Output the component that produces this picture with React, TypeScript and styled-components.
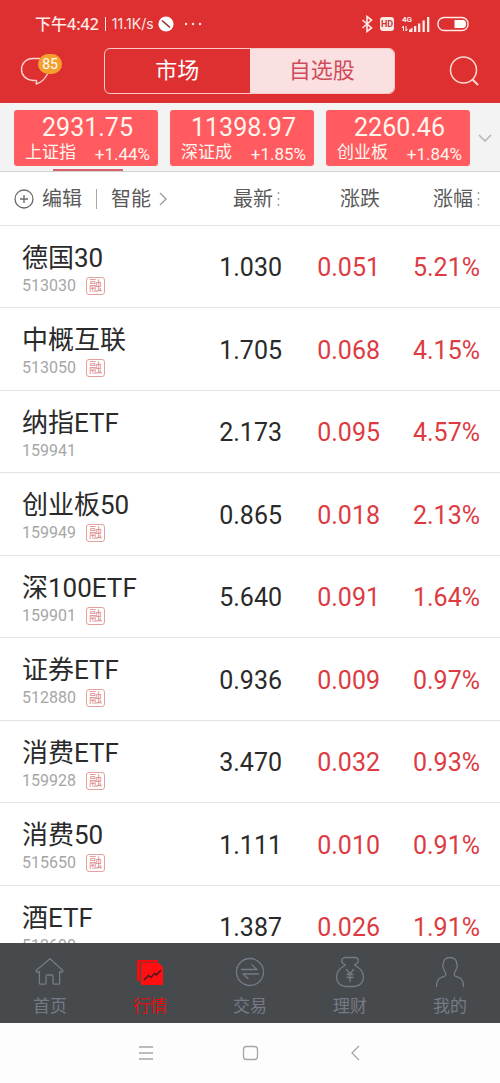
import React from "react";
import styled, { createGlobalStyle, css } from "styled-components";

const GlobalStyle = createGlobalStyle`
  *, *::before, *::after { box-sizing: border-box; }
  body {
    margin: 0;
    background: #fff;
    color: #222;
    font-family: Roboto, "Noto Sans CJK SC", sans-serif;
  }
  button {
    margin: 0;
    padding: 0;
    border: 0;
    background: none;
    color: inherit;
    font: inherit;
    cursor: pointer;
  }
  svg { display: block; flex: none; }
`;

const Page = styled.div`
  display: flex;
  flex-direction: column;
  height: 100vh;
  overflow: hidden;
`;

const TopArea = styled.header`
  flex: none;
  background: #de3031;
  color: #fff;
`;

const StatusBar = styled.div`
  display: flex;
  align-items: center;
  justify-content: space-between;
  height: 48px;
  padding: 0 31px 0 35px;
  color: #fde9e6;
`;

const StatusGroup = styled.div<{ $gap: number }>`
  display: flex;
  align-items: center;
  gap: ${(p) => p.$gap}px;
`;

const Clock = styled.span`
  font: 500 16px/24px "Noto Sans", "Noto Sans CJK SC", sans-serif;
`;

const Speed = styled.span`
  font: 400 14px/24px Inter, "Noto Sans CJK SC", sans-serif;
`;

const Divider = styled.span<{ $height: number; $color: string }>`
  width: 1px;
  height: ${(p) => p.$height}px;
  background: ${(p) => p.$color};
`;

const TitleBar = styled.div`
  display: flex;
  align-items: center;
  justify-content: space-between;
  height: 55px;
  padding: 0 20px 9px 20px;
`;

const MessageButton = styled.button`
  position: relative;
  width: 44px;
  height: 30px;
`;

const Count = styled.span`
  position: absolute;
  top: -2px;
  left: 18px;
  width: 24px;
  height: 20px;
  border-radius: 10px;
  background: #f5a02c;
  font-size: 14px;
  line-height: 21px;
  text-align: center;
`;

const Segments = styled.nav`
  display: flex;
  flex: 1;
  height: 46px;
  margin: 0 54px 0 40px;
  border: 1px solid #f9c9c7;
  border-radius: 6px;
  overflow: hidden;
`;

const Segment = styled.button<{ $active?: boolean }>`
  flex: 1;
  font-size: 22px;
  line-height: 44px;
  ${(p) =>
    p.$active &&
    css`
      background: #fbe0e1;
      color: #d04a5b;
    `}
`;

const IndexStrip = styled.section`
  display: flex;
  flex: none;
  align-items: flex-start;
  height: 69px;
  padding: 7px 0 0 14px;
  border-bottom: 1px solid #d4d4d4;
  background: #f3f3f3;
`;

const IndexCards = styled.div`
  display: grid;
  flex: 1;
  grid-template-columns: repeat(3, 1fr);
  gap: 12px;
`;

const IndexCard = styled.button<{ $active?: boolean }>`
  position: relative;
  height: 56px;
  padding: 4px 8px 0 11px;
  border-radius: 3px;
  background: #ff5b60;
  color: #fff6ee;
  ${(p) =>
    p.$active &&
    css`
      &::after {
        content: "";
        position: absolute;
        bottom: -5px;
        left: 27%;
        right: 24%;
        height: 2px;
        background: #d9606a;
      }
    `}
`;

const IndexValue = styled.div`
  font-size: 25px;
  line-height: 28px;
`;

const IndexMeta = styled.div`
  display: flex;
  justify-content: space-between;
  font-size: 17px;
  line-height: 20px;
`;

const IndexChange = styled.span`
  line-height: 24px;
`;

const ExpandButton = styled.button`
  display: flex;
  justify-content: center;
  align-items: center;
  width: 30px;
  height: 56px;
`;

const ListArea = styled.main`
  flex: 1;
  min-height: 0;
  overflow-y: auto;
  scrollbar-width: none;
`;

const QuoteTable = styled.table`
  width: 100%;
  table-layout: fixed;
  border-collapse: separate;
  border-spacing: 0;
`;

const HeadCell = styled.th<{ $width?: number; $end?: number }>`
  position: sticky;
  top: 0;
  z-index: 1;
  width: ${(p) => (p.$width ? `${p.$width}px` : "auto")};
  height: 54px;
  padding: 0 ${(p) => p.$end ?? 0}px 0 0;
  border-bottom: 1px solid #e2e2e2;
  background: #fff;
  color: #5a5a5a;
  font-size: 20px;
  font-weight: 400;
  line-height: 30px;
  text-align: right;
`;

const HeadTools = styled.div`
  display: flex;
  align-items: center;
  gap: 14px;
  padding-left: 14px;
  white-space: nowrap;
`;

const ToolButton = styled.button`
  display: inline-flex;
  align-items: center;
  gap: 8px;
`;

const SortButton = styled.button`
  display: inline-flex;
  align-items: center;
  gap: 4px;
`;

const QuoteRow = styled.tr`
  height: 82px;
  &:nth-child(even) { height: 83px; }
`;

const NameCell = styled.th`
  padding: 6px 0 0 22px;
  border-bottom: 1px solid #e4e4e4;
  color: #2a2a2a;
  font-weight: 400;
  text-align: left;
  white-space: nowrap;
`;

const Name = styled.div`
  font-size: 26px;
  line-height: 32px;
`;

const CodeLine = styled.div`
  display: flex;
  align-items: center;
  gap: 10px;
  height: 24px;
  color: #a6a6a6;
  font-size: 16px;
  line-height: 24px;
`;

const MarginTag = styled.span`
  width: 19px;
  height: 18px;
  border: 1px solid #e5a09f;
  border-radius: 3px;
  color: #e08c8b;
  font-size: 13px;
  line-height: 16px;
  text-align: center;
`;

const NumberCell = styled.td<{ $rise?: boolean; $end?: number }>`
  padding: 3px ${(p) => p.$end ?? 0}px 0 0;
  border-bottom: 1px solid #e4e4e4;
  color: ${(p) => (p.$rise ? "#dc3b42" : "#2a2a2a")};
  font-size: 25px;
  line-height: 30px;
  text-align: right;
`;

const TabBar = styled.nav`
  display: grid;
  flex: none;
  grid-template-columns: repeat(5, 1fr);
  height: 80px;
  background: #474a4d;
`;

const TabLink = styled.a<{ $active?: boolean }>`
  display: flex;
  flex-direction: column;
  align-items: center;
  gap: 6px;
  padding-top: 13px;
  color: ${(p) => (p.$active ? "#e01012" : "#767a86")};
  font-size: 17px;
  line-height: 24px;
  text-decoration: none;
`;

const SystemNav = styled.nav`
  display: flex;
  flex: none;
  align-items: center;
  justify-content: center;
  gap: 84px;
  height: 60px;
  background: #fdfdfd;
`;

const SystemButton = styled.button`
  width: 20px;
  height: 20px;
`;

const indices = [
  { name: "上证指", value: "2931.75", change: "+1.44%" },
  { name: "深证成", value: "11398.97", change: "+1.85%" },
  { name: "创业板", value: "2260.46", change: "+1.84%" },
];

const quotes = [
  { name: "德国30", code: "513030", margin: true, last: "1.030", diff: "0.051", pct: "5.21%" },
  { name: "中概互联", code: "513050", margin: true, last: "1.705", diff: "0.068", pct: "4.15%" },
  { name: "纳指ETF", code: "159941", margin: false, last: "2.173", diff: "0.095", pct: "4.57%" },
  { name: "创业板50", code: "159949", margin: true, last: "0.865", diff: "0.018", pct: "2.13%" },
  { name: "深100ETF", code: "159901", margin: true, last: "5.640", diff: "0.091", pct: "1.64%" },
  { name: "证券ETF", code: "512880", margin: true, last: "0.936", diff: "0.009", pct: "0.97%" },
  { name: "消费ETF", code: "159928", margin: true, last: "3.470", diff: "0.032", pct: "0.93%" },
  { name: "消费50", code: "515650", margin: true, last: "1.111", diff: "0.010", pct: "0.91%" },
  { name: "酒ETF", code: "512690", margin: false, last: "1.387", diff: "0.026", pct: "1.91%" },
];

const SortDots = () => (
  <svg width="3" height="16" viewBox="0 0 3 16" fill="#9a9a9a" aria-hidden="true">
    <circle cx="1.5" cy="2" r="0.9" />
    <circle cx="1.5" cy="8" r="0.9" />
    <circle cx="1.5" cy="14" r="0.9" />
  </svg>
);

const lineIcon = {
  width: 30,
  height: 32,
  viewBox: "0 0 30 32",
  fill: "none",
  stroke: "currentColor",
  strokeWidth: 1.3,
  strokeLinecap: "round" as const,
  strokeLinejoin: "round" as const,
  "aria-hidden": true,
};

const HomeIcon = () => (
  <svg {...lineIcon}>
    <path d="M15 2.8 1.4 14.2c-.8 1 .1 2.1 1.3 1.8l1.7-.4v11.6c0 .6.4 1 1 1h4.8c.5 0 .8-.3.8-.8v-6.8c0-1 .5-1.6 1.5-1.6h4c1 0 1.5.6 1.5 1.6v6.8c0 .5.3.8.8.8h4.8c.6 0 1-.4 1-1V15.6l1.7.4c1.2.3 2.1-.8 1.3-1.8Z" />
  </svg>
);

const MarketIcon = () => (
  <svg width="30" height="32" viewBox="0 0 30 32" aria-hidden="true">
    <path d="M3.5 4H23v2.500H5V25H3.500c-.9 0-1.500-.6-1.500-1.500v-18C2 4.600 2.600 4 3.500 4Z" fill="#f40d0e" />
    <path d="M7.500 7H24l4 4v16.500c0 1-.6 1.500-1.500 1.500h-19C6.600 29 6 28.500 6 27.500v-19C6 7.600 6.600 7 7.500 7Z" fill="#ff0f10" />
    <path d="m9 24 4.500-4.500 2.500 2 3.500-4 2 1.500 4.500-5" fill="none" stroke="#4e1a1c" strokeWidth="1.6" />
  </svg>
);

const TradeIcon = () => (
  <svg {...lineIcon}>
    <circle cx="15" cy="16" r="13.5" />
    <path d="M6.500 13.500H22l-5-4.500M23.500 18H8l5 4.500" />
  </svg>
);

const WealthIcon = () => (
  <svg {...lineIcon}>
    <path d="M10.500 9c-2-1-3.800-2.500-3.800-4.500s2-3 4-3h8.600c2 0 4 1 4 3s-1.800 3.500-3.800 4.500c3.500 2.500 9 5 9 12 0 5.500-4 9.500-9 9.500h-9c-5 0-9-4-9-9.500 0-7 5.500-9.500 9-12Z" />
    <path d="m11.500 13.500 3.500 4.500 3.500-4.500M15 18v7.500M12 18.500h6M12 21.500h6" />
  </svg>
);

const ProfileIcon = () => (
  <svg {...lineIcon}>
    <path d="M1.500 30.500c0-5.500 1.500-8 5-9.200l3-1c1.500-.8 1.700-2.300.8-3.800-1-1.700-1.500-2.500-1.800-4.500-1-.7-1-2.500-.3-3.500C8.200 4 10.500 1.500 15 1.500S21.800 4 21.800 8.500c.7 1 .7 2.800-.3 3.500-.3 2-.8 2.800-1.800 4.500-.9 1.500-.7 3 .8 3.800l3 1c3.500 1.200 5 3.700 5 9.200" />
  </svg>
);

const tabs = [
  { label: "首页", icon: <HomeIcon /> },
  { label: "行情", icon: <MarketIcon />, active: true },
  { label: "交易", icon: <TradeIcon /> },
  { label: "理财", icon: <WealthIcon /> },
  { label: "我的", icon: <ProfileIcon /> },
];

const MutedIcon = () => (
  <svg width="16" height="16" viewBox="0 0 16 16" aria-hidden="true">
    <circle cx="8" cy="8" r="7.6" fill="#fff" />
    <path d="m4 4.500 8 7" stroke="#8f2b30" strokeWidth="1.6" />
  </svg>
);

const MoreDots = () => (
  <svg width="20" height="4" viewBox="0 0 20 4" fill="#fde9e6" aria-hidden="true">
    <circle cx="3" cy="2" r="1.2" />
    <circle cx="10" cy="2" r="1.2" />
    <circle cx="17" cy="2" r="1.2" />
  </svg>
);

const BluetoothIcon = () => (
  <svg width="12" height="18" viewBox="0 0 12 18" fill="none" stroke="#fde9e6" strokeWidth="1.6" aria-hidden="true">
    <path d="m1.500 5 9 8L6 16.500v-15L10.500 5l-9 8" />
  </svg>
);

const HdBadge = styled.span`
  width: 14px;
  height: 14px;
  border-radius: 3px;
  background: #fde9e6;
  color: #c9383a;
  font-size: 9px;
  font-weight: 700;
  line-height: 14px;
  text-align: center;
`;

const SignalIcon = () => (
  <svg width="29" height="18" viewBox="0 0 29 18" fill="#fde9e6" aria-hidden="true">
    <text x="1" y="7" fontSize="8" fontWeight="700">4G</text>
    <path d="M8 17v-2l3.500-2.500V17ZM13 11h2.300v6H13ZM17 8.500h2.300V17H17ZM21.500 5.500h2.300V17h-2.300ZM26 2h2.300v15H26Z" />
    <path d="M2.500 16v-5L1 13M5 11v5l1.500-2" fill="none" stroke="#fde9e6" />
  </svg>
);

const BatteryIcon = () => (
  <svg width="32" height="16" viewBox="0 0 32 16" aria-hidden="true">
    <rect x="1" y="1.5" width="30" height="13" rx="6" fill="none" stroke="#fde9e6" strokeWidth="1.4" />
    <path d="M17.500 4H26c2 0 3 1.500 3 4s-1 4-3 4h-8.500Z" fill="#fff" />
  </svg>
);

export default function App() {
  return (
    <>
      <GlobalStyle />
      <Page>
        <TopArea>
          <StatusBar>
            <StatusGroup $gap={4}>
              <StatusGroup $gap={6}>
                <Clock>下午4:42</Clock>
                <Divider $height={14} $color="#fde9e6" />
                <Speed>11.1K/s</Speed>
              </StatusGroup>
              <StatusGroup $gap={9}>
                <MutedIcon />
                <MoreDots />
              </StatusGroup>
            </StatusGroup>
            <StatusGroup $gap={7}>
              <BluetoothIcon />
              <HdBadge>HD</HdBadge>
              <SignalIcon />
              <BatteryIcon />
            </StatusGroup>
          </StatusBar>
          <TitleBar>
            <MessageButton aria-label="消息">
              <svg width="30" height="30" viewBox="0 0 30 30" fill="none" stroke="#fbd5cf" strokeWidth="1.4" strokeLinejoin="round" aria-hidden="true">
                <path d="M20 2.500h-7C6 2.500 1.500 7.500 1.500 13.500S6 24 13 24.500h3.500c.5 1-.2 2-.3 3.500 4-.8 8.500-5 11.300-10" />
              </svg>
              <Count>85</Count>
            </MessageButton>
            <Segments>
              <Segment>市场</Segment>
              <Segment $active>自选股</Segment>
            </Segments>
            <button aria-label="搜索">
              <svg width="31" height="30" viewBox="0 0 31 30" fill="none" stroke="#fddbd3" strokeWidth="1.5" aria-hidden="true">
                <circle cx="14.5" cy="14" r="13" />
                <path d="m23.500 23.500 5.500 5.500" strokeWidth="2" />
              </svg>
            </button>
          </TitleBar>
        </TopArea>

        <IndexStrip>
          <IndexCards>
            {indices.map((item, i) => (
              <IndexCard key={item.name} $active={i === 0}>
                <IndexValue>{item.value}</IndexValue>
                <IndexMeta>
                  <span>{item.name}</span>
                  <IndexChange>{item.change}</IndexChange>
                </IndexMeta>
              </IndexCard>
            ))}
          </IndexCards>
          <ExpandButton aria-label="展开">
            <svg width="14" height="8" viewBox="0 0 14 8" fill="none" stroke="#b4b4b4" strokeWidth="1.5" aria-hidden="true">
              <path d="m1 1 6 6 6-6" />
            </svg>
          </ExpandButton>
        </IndexStrip>

        <ListArea>
          <QuoteTable>
            <thead>
              <tr>
                <HeadCell scope="col">
                  <HeadTools>
                    <ToolButton>
                      <svg width="20" height="20" viewBox="0 0 20 20" fill="none" stroke="#6a6a6a" strokeWidth="1.3" aria-hidden="true">
                        <circle cx="10" cy="10" r="9" />
                        <path d="M10 6v8M6 10h8" />
                      </svg>
                      编辑
                    </ToolButton>
                    <Divider $height={20} $color="#a8a8a8" />
                    <ToolButton>
                      智能
                      <svg width="8" height="14" viewBox="0 0 8 14" fill="none" stroke="#9a9a9a" strokeWidth="1.3" aria-hidden="true">
                        <path d="m1 1 6 6-6 6" />
                      </svg>
                    </ToolButton>
                  </HeadTools>
                </HeadCell>
                <HeadCell scope="col" $width={92} $end={2}>
                  <SortButton>
                    最新
                    <SortDots />
                  </SortButton>
                </HeadCell>
                <HeadCell scope="col" $width={98}>
                  <SortButton>涨跌</SortButton>
                </HeadCell>
                <HeadCell scope="col" $width={120} $end={20}>
                  <SortButton>
                    涨幅
                    <SortDots />
                  </SortButton>
                </HeadCell>
              </tr>
            </thead>
            <tbody>
              {quotes.map((q) => (
                <QuoteRow key={q.code}>
                  <NameCell scope="row">
                    <Name>{q.name}</Name>
                    <CodeLine>
                      {q.code}
                      {q.margin && <MarginTag>融</MarginTag>}
                    </CodeLine>
                  </NameCell>
                  <NumberCell>{q.last}</NumberCell>
                  <NumberCell $rise>{q.diff}</NumberCell>
                  <NumberCell $rise $end={20}>{q.pct}</NumberCell>
                </QuoteRow>
              ))}
            </tbody>
          </QuoteTable>
        </ListArea>

        <TabBar>
          {tabs.map((tab) => (
            <TabLink key={tab.label} href="#" $active={tab.active}>
              {tab.icon}
              {tab.label}
            </TabLink>
          ))}
        </TabBar>

        <SystemNav>
          <SystemButton aria-label="最近任务">
            <svg width="20" height="20" viewBox="0 0 20 20" stroke="#a6a6a6" strokeWidth="1.3" aria-hidden="true">
              <path d="M3 4h14M3 10h14M3 16h14" />
            </svg>
          </SystemButton>
          <SystemButton aria-label="主屏幕">
            <svg width="20" height="20" viewBox="0 0 20 20" fill="none" stroke="#a6a6a6" strokeWidth="1.3" aria-hidden="true">
              <rect x="3.5" y="3.5" width="14" height="13" rx="3" />
            </svg>
          </SystemButton>
          <SystemButton aria-label="返回">
            <svg width="20" height="20" viewBox="0 0 20 20" fill="none" stroke="#a6a6a6" strokeWidth="1.3" aria-hidden="true">
              <path d="m15 3-7 7 7 7" />
            </svg>
          </SystemButton>
        </SystemNav>
      </Page>
    </>
  );
}
